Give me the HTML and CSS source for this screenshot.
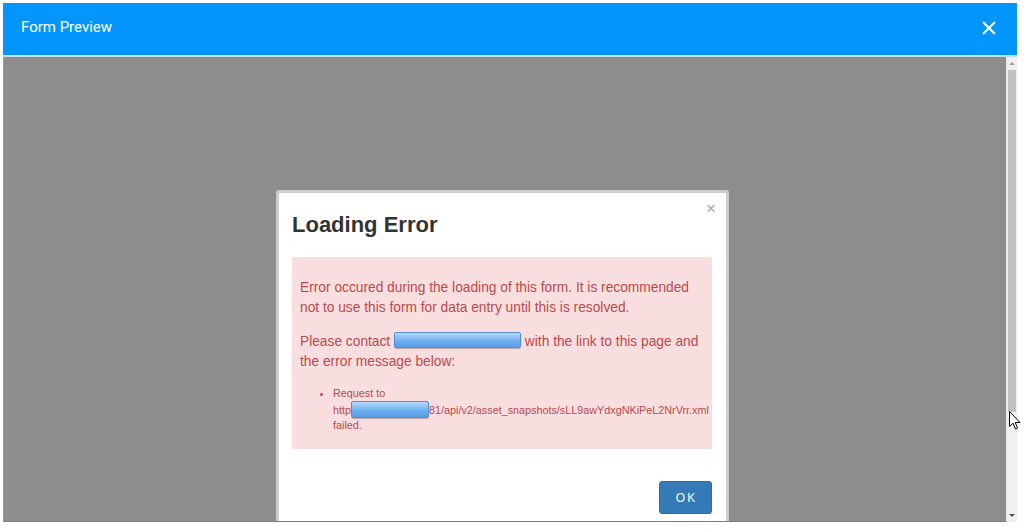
FILE: index.html
```html
<!DOCTYPE html>
<html>
<head>
<meta charset="utf-8">
<link rel="stylesheet" href="styles.css">
</head>
<body>
<div class="frame">
  <div class="header">
    <span class="title">Form Preview</span>
    <svg class="hclose" width="16" height="16" viewBox="0 0 16 16"><path d="M2 2L14 14M14 2L2 14" stroke="#fff" stroke-width="2" fill="none"/></svg>
  </div>
  <div class="sep"></div>
  <div class="content">
    <div class="viewport">
      <div class="modal">
        <span class="mclose">&times;</span>
        <h4 class="mtitle">Loading Error</h4>
        <div class="alert">
          <p>Error occured during the loading of this form. It is recommended not to use this form for data entry until this is resolved.</p>
          <p><span>Please contact</span>&nbsp;<span class="redact r1"></span>&nbsp;<span>with the link to this page and</span> <span>the error message below:</span></p>
          <ul>
            <li>Request to<br>http<span class="redact r2"></span>81/api/v2/asset_snapshots/sLL9awYdxgNKiPeL2NrVrr.xml<br>failed.</li>
          </ul>
        </div>
        <div class="footer">
          <button class="ok">OK</button>
        </div>
      </div>
    </div>
    <div class="scrollbar">
      <div class="arrow up"></div>
      <div class="track"><div class="thumb"></div></div>
      <div class="arrow down"></div>
    </div>
  </div>
</div>
<svg class="cursor" width="12" height="19" viewBox="0 0 12 19"><path d="M0.5 0.5L0.5 15.5L4 12.2L6.5 18L8.6 17.1L6.2 11.5L11 11.5Z" fill="#fff" stroke="#000" stroke-width="1"/></svg>
</body>
</html>
```
FILE: styles.css
```css
html, body { margin: 0; padding: 0; background: #fff; }
body { padding: 3px 0 0 3px; position: relative; height: 529px; overflow: hidden; }
.frame { width: 1014px; }
.header {
  height: 52px;
  background: #0395fc;
  display: flex;
  align-items: center;
  justify-content: space-between;
  padding: 0 20px 0 18px;
  box-sizing: border-box;
}
.title {
  color: #fff;
  font-family: Roboto, "Liberation Sans", sans-serif;
  font-size: 15px;
  margin-top: -4px;
}
.hclose { margin-top: -3px; }
.sep { height: 2px; background: #c9dcea; }
.content { display: flex; height: 465px; }
.viewport {
  flex: 1;
  background: #8d8d8d;
  border-left: 1px solid #9a9a9a;
  border-right: 1px solid #e6e6e6;
  border-bottom: 1px solid #7d7d7d;
  overflow: hidden;
  display: flex;
  justify-content: center;
  align-items: flex-start;
  padding-top: 133px;
  box-sizing: border-box;
  height: 465px;
}
.modal {
  position: relative;
  width: 453px;
  box-sizing: border-box;
  background: #fff;
  border: 3px solid #cdcdcd;
  border-radius: 3px;
  padding: 19px 14px 30px 13px;
  font-family: "Liberation Sans", Arial, sans-serif;
  margin-left: -5px;
}
.mclose {
  position: absolute;
  top: 6px;
  right: 10px;
  color: #a6a6a6;
  font-size: 17px;
  line-height: 20px;
}
.mtitle {
  margin: 0;
  font-size: 22px;
  line-height: 26px;
  font-weight: bold;
  color: #333;
}
.alert {
  margin-top: 19px;
  background: #f9dee0;
  color: #b94a4a;
  padding: 21px 4px 16px 8px;
  font-size: 13.75px;
  line-height: 20px;
}
.alert p { margin: 0 0 14px 0; }
.alert ul {
  margin: 0;
  padding-left: 33px;
  font-size: 10.8px;
  line-height: 15px;
}
.alert li { white-space: nowrap; }
.redact {
  display: inline-block;
  height: 14px;
  vertical-align: -2px;
  background: linear-gradient(#b5d8f8, #6aaef0 60%, #5c9ee6);
  border: 1px solid #4d8fd6;
  border-radius: 2px;
  box-shadow: 0 1px 1px rgba(0,0,0,0.25);
}
.r1 { width: 125px; }
.r2 { width: 76px; height: 15px; vertical-align: -4px; }
.footer {
  display: flex;
  justify-content: flex-end;
  margin-top: 32px;
}
.ok {
  width: 53px;
  height: 33px;
  background: #337ab7;
  border: 1px solid #2e6da4;
  border-radius: 3px;
  color: #fff;
  font-family: "Liberation Sans", Arial, sans-serif;
  font-size: 12px;
  letter-spacing: 2px;
  padding: 0 0 0 2px;
}
.scrollbar {
  width: 10px;
  background: #f0f0f0;
  display: flex;
  flex-direction: column;
}
.arrow { height: 13px; position: relative; }
.arrow::after {
  content: "";
  position: absolute;
  left: 2px;
  border-left: 3px solid transparent;
  border-right: 3px solid transparent;
}
.arrow.up::after { top: 5px; border-bottom: 3px solid #a0a0a0; }
.arrow.down::after { top: 5px; border-top: 3px solid #505050; }
.track { flex: 1; padding: 0 1px; }
.thumb { height: 342px; background: #c1c1c1; }
.cursor { position: absolute; left: 1009px; top: 411px; }
```
